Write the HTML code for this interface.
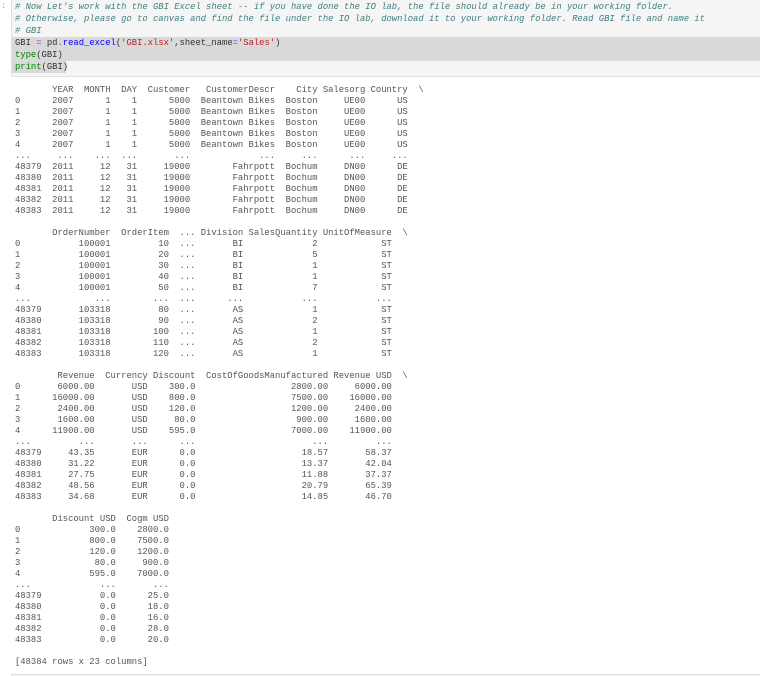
<!DOCTYPE html>
<html><head><meta charset="utf-8"><style>
html,body{margin:0;padding:0;background:#fff;width:760px;height:676px;overflow:hidden}
body{position:relative;font-family:"Liberation Mono","DejaVu Sans Mono",monospace}
.cell{position:absolute;left:11px;top:-2px;width:760px;height:79px;background:#f5f5f5;border:1px solid #e0e0e0;border-right:none;box-sizing:border-box}
.prompt{position:absolute;left:1px;top:1px;font-size:9px;color:#999}
.code{position:absolute;left:15px;top:1px;font-size:8.85px;line-height:12px;white-space:pre;color:#333}
.hl{position:absolute;left:12px;top:37px;width:748px;height:24px;background:#d9d9d9}
.hl2{position:absolute;left:12px;top:61px;width:54px;height:12px;background:#d9d9d9}
.c{color:#408080;font-style:italic}
.s{color:#ba2121}.k{color:#008000}.o{color:#aa22ff}.f{color:#0000ff}
.out{position:absolute;left:15px;top:85px;font-size:8.85px;line-height:11px;white-space:pre;color:#555;margin:0}
.next{position:absolute;left:11px;top:674px;width:760px;height:10px;background:#f5f5f5;border:1px solid #e0e0e0}
</style></head><body>
<div class="prompt">:</div>
<div class="cell"></div>
<div class="hl"></div><div class="hl2"></div>
<div class="code"><span class="c"># Now Let's work with the GBI Excel sheet -- if you have done the IO lab, the file should already be in your working folder.</span>
<span class="c"># Otherwise, please go to canvas and find the file under the IO lab, download it to your working folder. Read GBI file and name it</span>
<span class="c"># GBI</span>
GBI <span class="o">=</span> pd<span class="o">.</span><span class="f">read_excel</span>(<span class="s">'GBI.xlsx'</span>,sheet_name<span class="o">=</span><span class="s">'Sales'</span>)
<span class="k">type</span>(GBI)
<span class="k">print</span>(GBI)</div>
<pre class="out">       YEAR  MONTH  DAY  Customer   CustomerDescr    City Salesorg Country  \
0      2007      1    1      5000  Beantown Bikes  Boston     UE00      US
1      2007      1    1      5000  Beantown Bikes  Boston     UE00      US
2      2007      1    1      5000  Beantown Bikes  Boston     UE00      US
3      2007      1    1      5000  Beantown Bikes  Boston     UE00      US
4      2007      1    1      5000  Beantown Bikes  Boston     UE00      US
...     ...    ...  ...       ...             ...     ...      ...     ...
48379  2011     12   31     19000        Fahrpott  Bochum     DN00      DE
48380  2011     12   31     19000        Fahrpott  Bochum     DN00      DE
48381  2011     12   31     19000        Fahrpott  Bochum     DN00      DE
48382  2011     12   31     19000        Fahrpott  Bochum     DN00      DE
48383  2011     12   31     19000        Fahrpott  Bochum     DN00      DE

       OrderNumber  OrderItem  ... Division SalesQuantity UnitOfMeasure  \
0           100001         10  ...       BI             2            ST
1           100001         20  ...       BI             5            ST
2           100001         30  ...       BI             1            ST
3           100001         40  ...       BI             1            ST
4           100001         50  ...       BI             7            ST
...            ...        ...  ...      ...           ...           ...
48379       103318         80  ...       AS             1            ST
48380       103318         90  ...       AS             2            ST
48381       103318        100  ...       AS             1            ST
48382       103318        110  ...       AS             2            ST
48383       103318        120  ...       AS             1            ST

        Revenue  Currency Discount  CostOfGoodsManufactured Revenue USD  \
0       6000.00       USD    300.0                  2800.00     6000.00
1      16000.00       USD    800.0                  7500.00    16000.00
2       2400.00       USD    120.0                  1200.00     2400.00
3       1600.00       USD     80.0                   900.00     1600.00
4      11900.00       USD    595.0                  7000.00    11900.00
...         ...       ...      ...                      ...         ...
48379     43.35       EUR      0.0                    18.57       58.37
48380     31.22       EUR      0.0                    13.37       42.04
48381     27.75       EUR      0.0                    11.88       37.37
48382     48.56       EUR      0.0                    20.79       65.39
48383     34.68       EUR      0.0                    14.85       46.70

       Discount USD  Cogm USD
0             300.0    2800.0
1             800.0    7500.0
2             120.0    1200.0
3              80.0     900.0
4             595.0    7000.0
...             ...       ...
48379           0.0      25.0
48380           0.0      18.0
48381           0.0      16.0
48382           0.0      28.0
48383           0.0      20.0

[48384 rows x 23 columns]</pre>
<div class="next"></div>
</body></html>
